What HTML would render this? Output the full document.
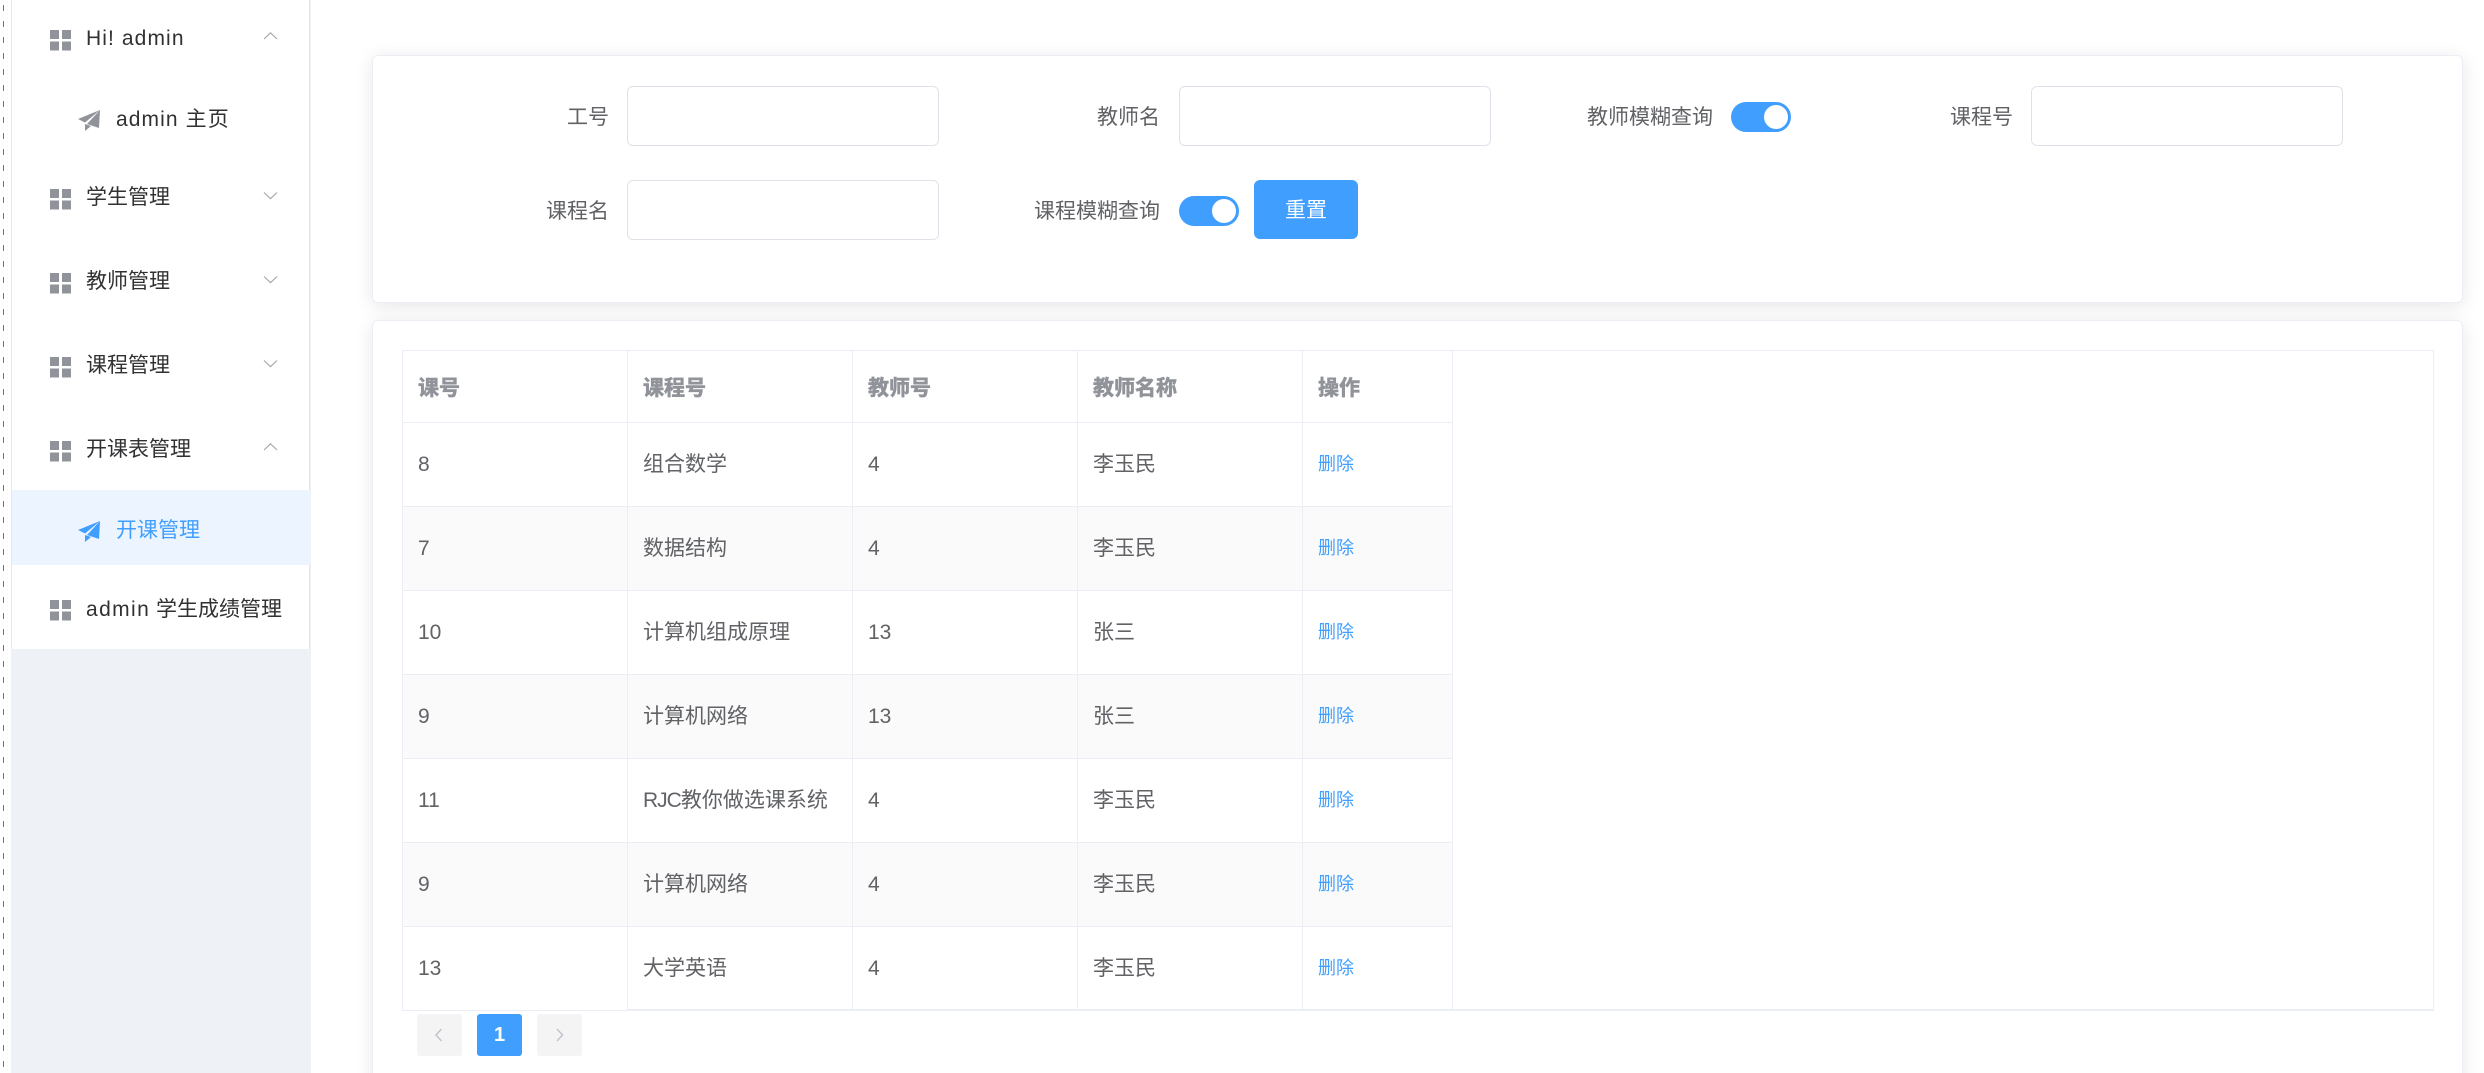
<!DOCTYPE html>
<html lang="zh-CN">
<head>
<meta charset="utf-8">
<title>开课管理</title>
<style>
*{box-sizing:border-box;margin:0;padding:0}
html,body{width:2484px;height:1073px;overflow:hidden;background:#fff}
body{position:relative;font-family:"Liberation Sans","Noto Sans CJK SC",sans-serif;font-size:21px;color:#606266}
.a{position:absolute;white-space:nowrap}
.dash{left:3px;top:0;width:1px;height:1073px;background:repeating-linear-gradient(to bottom,transparent 0,transparent 5px,#1b90d9 5px,#1b90d9 11px,transparent 11px,transparent 16px)}
.side{left:11px;top:0;width:300px;height:1073px;background:#eef1f6}
.menu{left:11px;top:0;width:299px;height:649px;background:#fff;border-left:1px solid #e8e8e8;border-right:1px solid #e6e6e6}
.active{left:12px;top:490px;width:298px;height:75px;background:#ecf5ff}
.mt{color:#303133;line-height:30px;height:30px}
.lat{letter-spacing:1.1px}
.card{background:#fff;border:1px solid #ebeef5;border-radius:6px;box-shadow:0 3px 18px rgba(0,0,0,.1)}
.input{background:#fff;border:1px solid #e0e2e9;border-radius:6px;width:312px;height:60px}
.lab{line-height:30px;height:30px;text-align:right;color:#606266}
.sw{width:60px;height:30px;border-radius:15px;background:#409eff}
.sw i{position:absolute;right:3px;top:3px;width:24px;height:24px;border-radius:50%;background:#fff}
.btn{left:1254px;top:180px;width:104px;height:59px;border-radius:6px;background:#409eff;color:#fff;text-align:center;line-height:61px}
.tw{left:402px;top:350px;width:2032px;height:661px;border:1px solid #ebeef5;background:#fff}
table{border-collapse:separate;border-spacing:0;table-layout:fixed;width:1050px}
td,th{border-right:1px solid #ebeef5;border-bottom:1px solid #ebeef5;padding:0 0 0 15px;text-align:left;font-size:21px;white-space:nowrap;overflow:hidden;height:84px;color:#606266;font-weight:400}
th{height:72px;color:#909399;font-weight:700;-webkit-text-stroke:.6px #909399}
td:nth-child(2),td:nth-child(4),td:nth-child(5){padding-bottom:3px}
tr.s td{background:#fafafa}
td a{font-size:18px;color:#409eff;text-decoration:none}
.r{letter-spacing:-1px}
.pg{top:1014px;width:45px;height:42px;border-radius:3px;background:#f4f4f5;text-align:center;line-height:42px;color:#c0c4cc}
</style>
</head>
<body>
<div class="a dash"></div>
<div class="a side"></div>
<div class="a menu"></div>
<div class="a active"></div>

<svg class="a" style="left:0;top:0;z-index:3" width="320" height="660" viewBox="0 0 320 660">
  <g fill="#909399">
    <path d="M50 30h9v9h-9zM62 30h9v9h-9zM50 41.500h9v9h-9zM62 41.500h9v9h-9z"/>
    <path d="M50 189h9v9h-9zM62 189h9v9h-9zM50 200.500h9v9h-9zM62 200.500h9v9h-9z"/>
    <path d="M50 273h9v9h-9zM62 273h9v9h-9zM50 284.500h9v9h-9zM62 284.500h9v9h-9z"/>
    <path d="M50 357h9v9h-9zM62 357h9v9h-9zM50 368.500h9v9h-9zM62 368.500h9v9h-9z"/>
    <path d="M50 441h9v9h-9zM62 441h9v9h-9zM50 452.500h9v9h-9zM62 452.500h9v9h-9z"/>
    <path d="M50 600h9v9h-9zM62 600h9v9h-9zM50 611.500h9v9h-9zM62 611.500h9v9h-9z"/>
    <path d="M100 110L78 119L85 122.500ZM100 110L87 124L99 128ZM85 124L85 131L91 126Z"/>
  </g>
  <path fill="#409eff" d="M100 521L78 530L85 533.500ZM100 521L87 535L99 539ZM85 535L85 542L91 537Z"/>
  <g fill="none" stroke="#a6a9ad" stroke-width="1.2">
    <path d="M264 39L270.500 32.800L277 39"/>
    <path d="M264 192.500L270.500 198.700L277 192.500"/>
    <path d="M264 276.500L270.500 282.700L277 276.500"/>
    <path d="M264 360.500L270.500 366.700L277 360.500"/>
    <path d="M264 450L270.500 443.800L277 450"/>
    <path d="M264 604.500L270.500 610.700L277 604.500"/>
  </g>
</svg>

<div class="a mt lat" style="left:86px;top:24px">Hi! admin</div>
<div class="a mt lat" style="left:116px;top:105px">admin 主页</div>
<div class="a mt" style="left:86px;top:183px">学生管理</div>
<div class="a mt" style="left:86px;top:267px">教师管理</div>
<div class="a mt" style="left:86px;top:351px">课程管理</div>
<div class="a mt" style="left:86px;top:435px">开课表管理</div>
<div class="a mt" style="left:116px;top:516px;color:#409eff">开课管理</div>
<div class="a mt" style="left:86px;top:595px;z-index:4"><span style="letter-spacing:1.4px">admin</span> 学生成绩管理</div>

<div class="a card" style="left:372px;top:55px;width:2091px;height:248px"></div>
<div class="a card" style="left:372px;top:320px;width:2091px;height:800px"></div>

<div class="a lab" style="left:400px;top:103px;width:209px">工号</div>
<div class="a input" style="left:627px;top:86px"></div>
<div class="a lab" style="left:951px;top:103px;width:209px">教师名</div>
<div class="a input" style="left:1179px;top:86px"></div>
<div class="a lab" style="left:1503px;top:103px;width:210px">教师模糊查询</div>
<div class="a sw" style="left:1731px;top:102px"><i></i></div>
<div class="a lab" style="left:1804px;top:103px;width:209px">课程号</div>
<div class="a input" style="left:2031px;top:86px"></div>

<div class="a lab" style="left:400px;top:197px;width:209px">课程名</div>
<div class="a input" style="left:627px;top:180px"></div>
<div class="a lab" style="left:951px;top:197px;width:209px">课程模糊查询</div>
<div class="a sw" style="left:1179px;top:196px"><i></i></div>
<div class="a btn">重置</div>

<div class="a tw">
<table>
<colgroup><col style="width:225px"><col style="width:225px"><col style="width:225px"><col style="width:225px"><col style="width:150px"></colgroup>
<tr><th>课号</th><th>课程号</th><th>教师号</th><th>教师名称</th><th>操作</th></tr>
<tr><td>8</td><td>组合数学</td><td>4</td><td>李玉民</td><td><a>删除</a></td></tr>
<tr class="s"><td>7</td><td>数据结构</td><td>4</td><td>李玉民</td><td><a>删除</a></td></tr>
<tr><td>10</td><td>计算机组成原理</td><td>13</td><td>张三</td><td><a>删除</a></td></tr>
<tr class="s"><td>9</td><td>计算机网络</td><td>13</td><td>张三</td><td><a>删除</a></td></tr>
<tr><td>11</td><td><span class="r">RJC</span>教你做选课系统</td><td>4</td><td>李玉民</td><td><a>删除</a></td></tr>
<tr class="s"><td>9</td><td>计算机网络</td><td>4</td><td>李玉民</td><td><a>删除</a></td></tr>
<tr><td>13</td><td>大学英语</td><td>4</td><td>李玉民</td><td><a>删除</a></td></tr>
</table>
</div>
<div class="a" style="left:627px;top:1009px;width:1807px;height:2px;background:#ebeef5"></div>

<div class="a pg" style="left:417px"><svg width="45" height="42" viewBox="0 0 45 42"><path d="M24.500 15L19 21L24.500 27" fill="none" stroke="#c0c4cc" stroke-width="1.500"/></svg></div>
<div class="a pg" style="left:477px;background:#409eff;color:#fff;font-weight:700;font-size:20px">1</div>
<div class="a pg" style="left:537px"><svg width="45" height="42" viewBox="0 0 45 42"><path d="M20 15L25.500 21L20 27" fill="none" stroke="#c0c4cc" stroke-width="1.500"/></svg></div>
</body>
</html>
